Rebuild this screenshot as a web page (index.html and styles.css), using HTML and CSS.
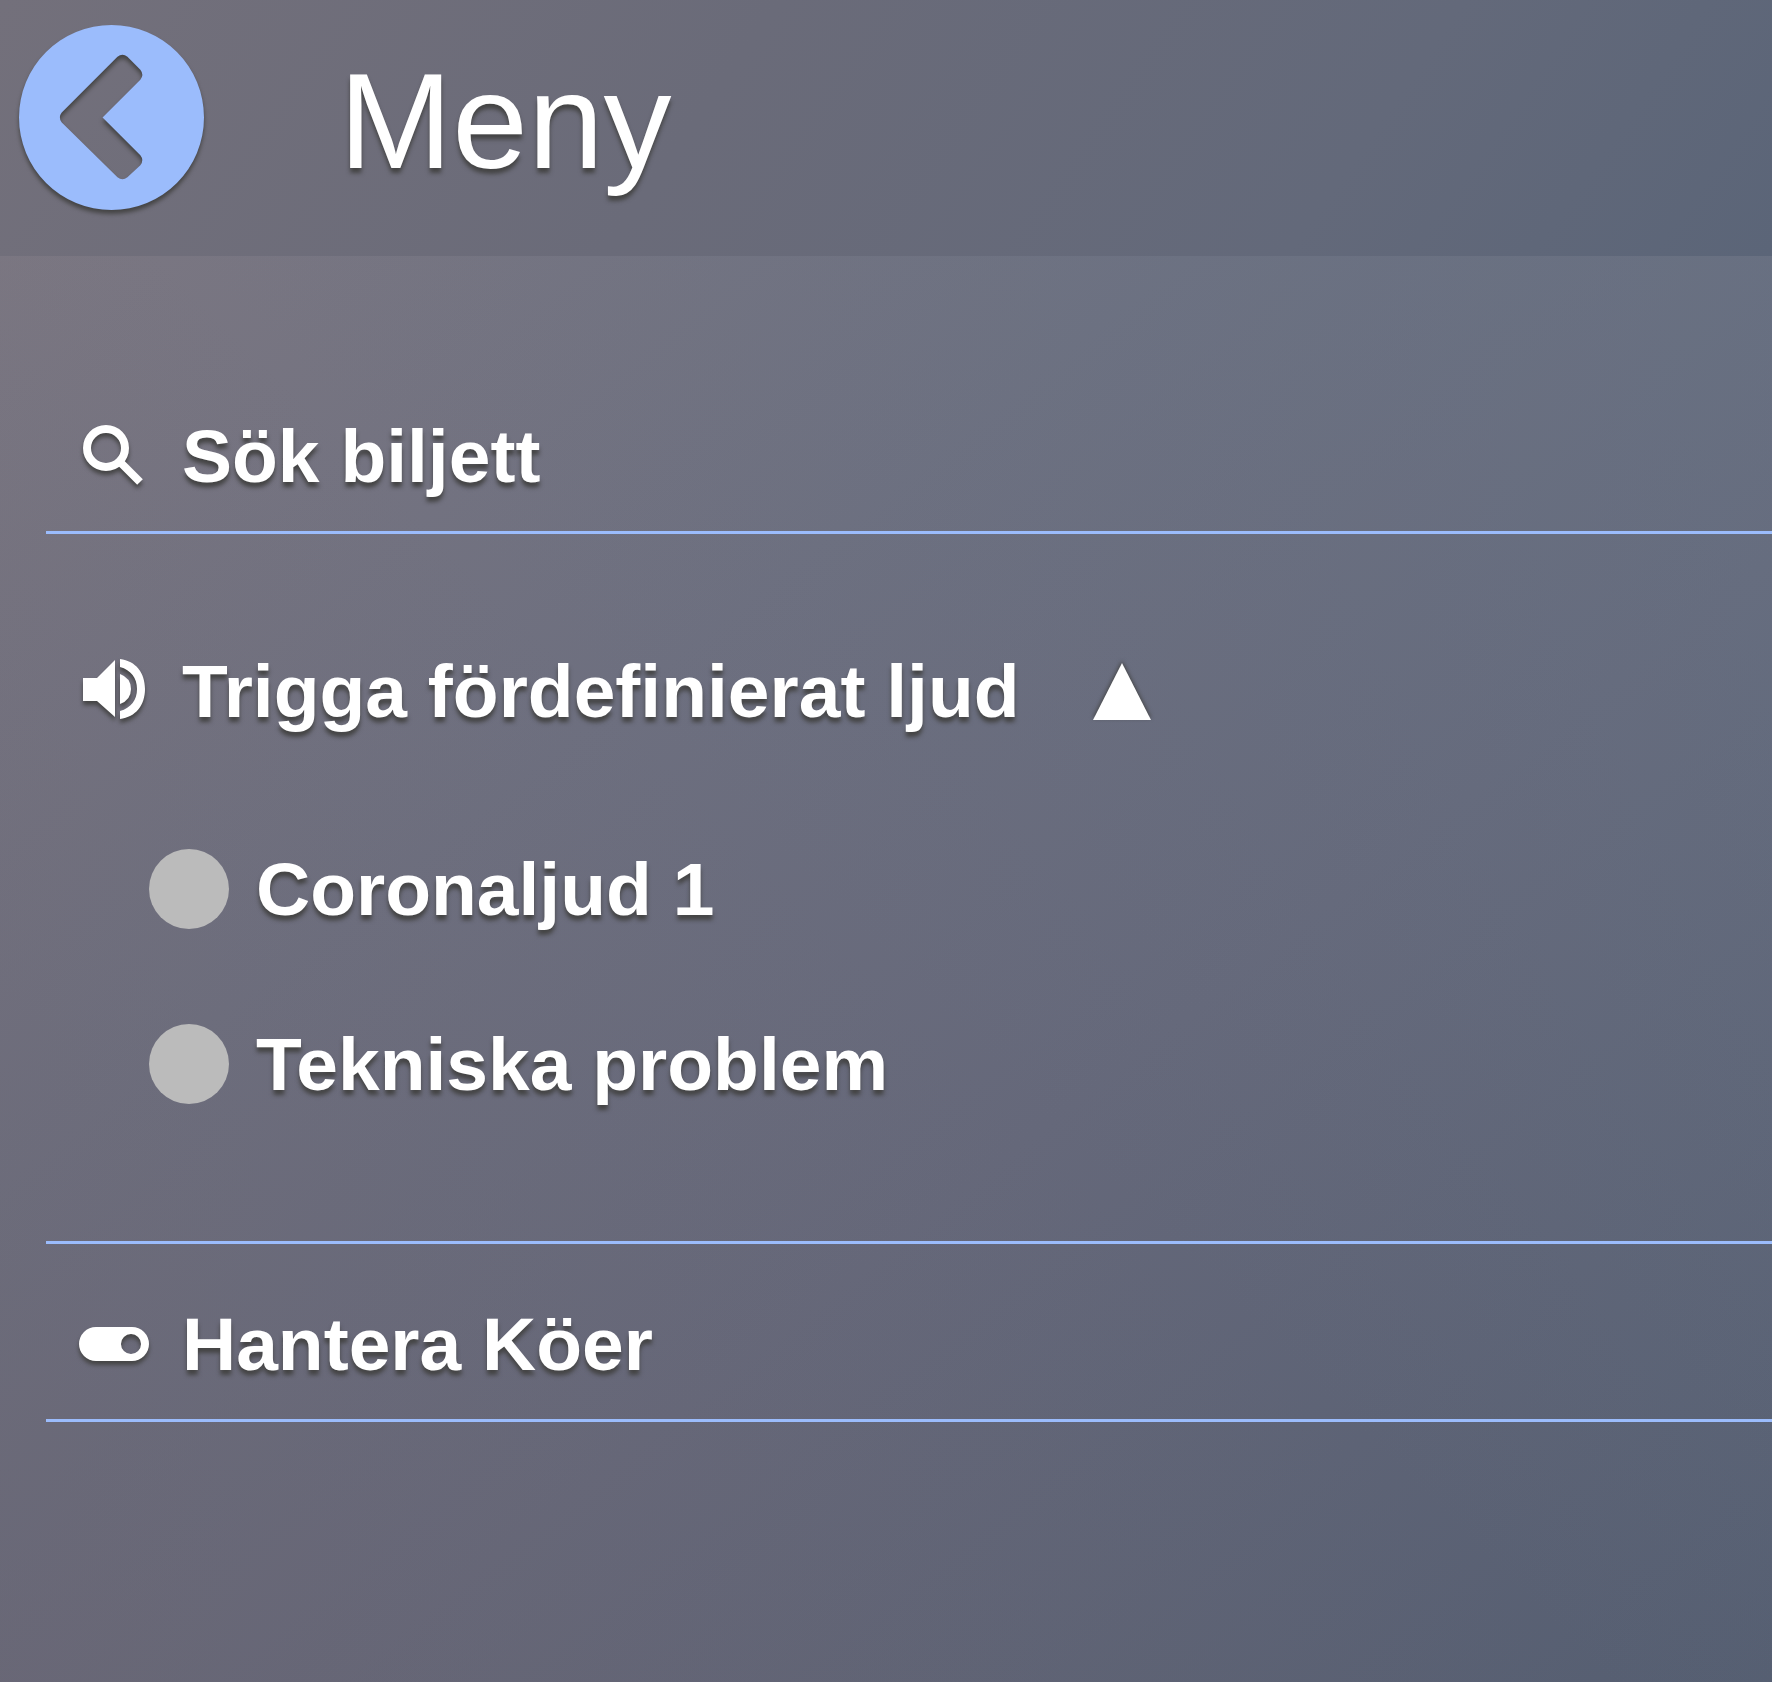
FILE: index.html
```html
<!DOCTYPE html>
<html lang="sv">
<head>
  <meta charset="UTF-8">
  <title>Meny</title>
  <meta name="viewport" content="width=device-width, initial-scale=1.0">
  <link rel="stylesheet" href="styles.css">
</head>
<body>
  <header class="topbar">
    <button class="back" type="button" aria-label="Tillbaka">
      <svg viewBox="0 0 186 186" aria-hidden="true">
        <path fill-rule="evenodd" d="M93 0a93 93 0 1 0 0 186a93 93 0 1 0 0-186zM99 32Q104 28 109 32L122 45Q126 50 122 55L84 93L122 131Q126 136 122 141L109 153Q104 157 99 153L43 98Q39 93 43 88z"/>
      </svg>
    </button>
    <h1>Meny</h1>
  </header>

  <main>
    <ul class="menu">
      <li class="menu-item search">
        <a class="row" href="#">
          <svg class="icon" viewBox="0 0 72 72" aria-hidden="true">
            <circle cx="27" cy="28" r="19" fill="none" stroke="#fff" stroke-width="8"/>
            <path d="M41 42L61 62" stroke="#fff" stroke-width="8"/>
          </svg>
          <span>Sök biljett</span>
        </a>
      </li>

      <li class="menu-item sounds">
        <button class="row" type="button" aria-expanded="true">
          <svg class="icon" viewBox="0 0 72 72" aria-hidden="true">
            <path d="M4 23H18L36 5V62L18 46H4z"/>
            <path d="M41 19Q52 23 52 34Q52 45 41 49z"/>
            <path d="M41 4C57 6 66 18 66 34S57 62 41 64V56C52 53 58 45 58 34S52 15 41 12z"/>
          </svg>
          <span>Trigga fördefinierat ljud</span>
          <svg class="arrow" viewBox="0 0 60 60" aria-hidden="true">
            <path d="M30 1L60 60H0z"/>
          </svg>
        </button>
        <div class="sound-list">
          <label class="sound"><input type="radio" name="ljud"> <span>Coronaljud 1</span></label>
          <label class="sound"><input type="radio" name="ljud"> <span>Tekniska problem</span></label>
        </div>
      </li>

      <li class="menu-item queues">
        <a class="row" href="#">
          <svg class="icon" viewBox="0 0 72 72" aria-hidden="true">
            <path fill-rule="evenodd" d="M17 19H53a17 17 0 0 1 0 34H17a17 17 0 0 1 0-34zM52 26a10 10 0 1 0 0 20a10 10 0 1 0 0-20z"/>
          </svg>
          <span>Hantera Köer</span>
        </a>
      </li>
    </ul>
  </main>
</body>
</html>
```
FILE: styles.css
```css
* {
  box-sizing: border-box;
}
body {
  display: flex;
  flex-direction: column;
  margin: 0;
  min-height: 100vh;
  font-family: Arial, "Liberation Sans", sans-serif;
  color: #fff;
}
.topbar {
  display: flex;
  align-items: center;
  gap: 135px;
  height: 256px;
  padding: 0 19px 22px;
  background: linear-gradient(125deg, #73707b 0%, #6a6b79 40%, #63697a 75%, #5b6578 100%);
}
.back {
  width: 185px;
  height: 185px;
  padding: 0;
  border: none;
  background: none;
  cursor: pointer;
}
.back svg {
  display: block;
  width: 100%;
  overflow: visible;
  fill: #9bbcfc;
  filter: drop-shadow(0 4px 2px #444);
}
h1 {
  margin: 0;
  padding-top: 8px;
  font-size: 136px;
  line-height: 156px;
  font-weight: normal;
  text-shadow: 0 5px 4px #444;
}
main {
  flex: 1;
  background:
    linear-gradient(45deg, rgba(106, 98, 108, 0.35) 0%, rgba(106, 98, 108, 0) 50%, rgba(104, 122, 140, 0.35) 100%),
    linear-gradient(142deg, #7b7782 0%, #6d6f7f 33%, #65687a 60%, #555e71 100%);
}
.menu {
  margin: 0;
  padding: 0 0 0 46px;
  list-style: none;
}
.menu-item {
  border-bottom: 3px solid #9bbcfc;
  font-size: 75px;
  line-height: 88px;
  font-weight: bold;
  text-shadow: 0 5px 4px #444;
}
.search {
  padding: 156px 0 31px;
}
.sounds {
  padding: 113px 0 133px;
}
.queues {
  padding: 56px 0 31px;
}
.row {
  display: flex;
  align-items: center;
  padding: 0 0 0 33px;
  border: none;
  background: none;
  color: inherit;
  font: inherit;
  text-shadow: inherit;
  text-decoration: none;
  cursor: pointer;
}
.icon {
  width: 72px;
  height: 72px;
  margin-right: 31px;
  overflow: visible;
  fill: #fff;
  filter: drop-shadow(0 4px 2px #444);
}
.arrow {
  width: 58px;
  height: 60px;
  margin-left: 73px;
  fill: #fff;
  filter: drop-shadow(0 -2px 2px #444);
}
.sound-list {
  display: flex;
  flex-direction: column;
  gap: 87px;
  padding: 110px 0 0 103px;
}
.sound {
  display: flex;
  align-items: center;
  gap: 27px;
  cursor: pointer;
}
.sound input {
  appearance: none;
  width: 80px;
  height: 80px;
  margin: 0;
  border-radius: 50%;
  background: #bbb;
}
.sound input:checked {
  background: #9bbcfc;
}
```
